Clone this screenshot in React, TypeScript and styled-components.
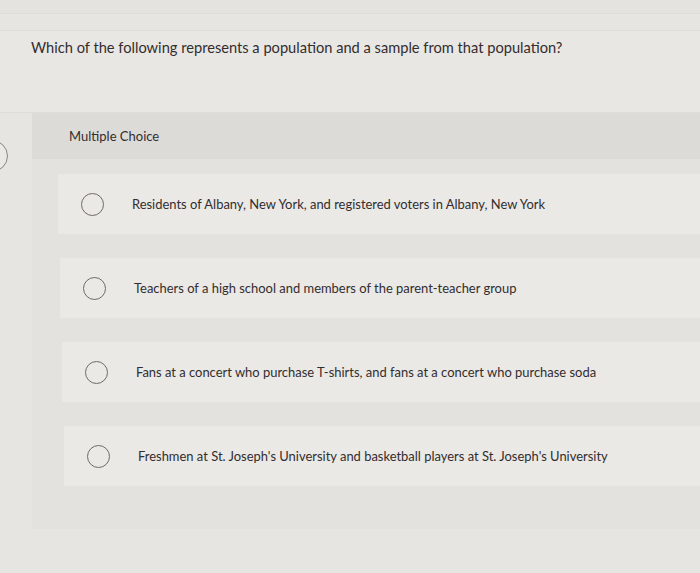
import React from "react";
import styled, { createGlobalStyle } from "styled-components";

const Global = createGlobalStyle`
  html, body { margin: 0; padding: 0; background: #e7e5e1; }
  body { width: 700px; height: 573px; overflow: hidden; font-family: Lato, "Open Sans", sans-serif; }
`;

const Page = styled.div`
  width: 700px;
  height: 573px;
  background: #e7e5e1;
  display: flex;
  flex-direction: column;
  overflow: hidden;
`;

const TopStrip = styled.div`
  height: 13px;
  background: #e5e3df;
  border-bottom: 1px solid #dedcd8;
`;

const QuestionCard = styled.div`
  margin: 16px 0 0 -6px;
  height: 83px;
  border: 1px solid #dfddd9;
  border-right: none;
  border-radius: 6px 0 0 6px;
  background: #e9e7e3;
  padding: 8px 0 0 36px;
  box-sizing: border-box;
`;

const Question = styled.p`
  margin: 0;
  font-size: 14.65px;
  color: #332d2f;
`;

const Body = styled.div`
  display: flex;
  align-items: flex-start;
`;

const SideCircle = styled.div`
  width: 30px;
  height: 30px;
  border-radius: 50%;
  border: 1.5px solid #8a8684;
  background: #ebe9e5;
  margin: 27px 0 0 -24px;
  flex-shrink: 0;
`;

const Panel = styled.div`
  margin-left: 24px;
  flex: 1;
  height: 416px;
  background: #e3e2de;
  display: flex;
  flex-direction: column;
`;

const PanelHeader = styled.div`
  height: 46px;
  background: #dcdbd7;
  display: flex;
  align-items: center;
  padding-left: 37px;
  font-size: 13px;
  color: #332d2f;
`;

const Options = styled.div`
  display: flex;
  flex-direction: column;
  gap: 24px;
  padding-top: 15px;
`;

const OptionRow = styled.div<{ $indent: number }>`
  margin-left: ${(p) => 26 + p.$indent}px;
  height: 60px;
  background: #eae9e5;
  display: flex;
  align-items: center;
  padding-left: 23px;
`;

const Radio = styled.span`
  width: 23px;
  height: 23px;
  border-radius: 50%;
  border: 1.3px solid #6e6a6a;
  box-sizing: border-box;
  flex-shrink: 0;
`;

const OptionText = styled.span`
  margin-left: 28px;
  font-size: 12.95px;
  color: #332d2f;
`;

const options = [
  "Residents of Albany, New York, and registered voters in Albany, New York",
  "Teachers of a high school and members of the parent-teacher group",
  "Fans at a concert who purchase T-shirts, and fans at a concert who purchase soda",
  "Freshmen at St. Joseph's University and basketball players at St. Joseph's University",
];

export default function App() {
  return (
    <Page>
      <Global />
      <TopStrip />
      <QuestionCard>
        <Question>Which of the following represents a population and a sample from that population?</Question>
      </QuestionCard>
      <Body>
        <SideCircle />
        <Panel>
          <PanelHeader>Multiple Choice</PanelHeader>
          <Options>
            {options.map((o, i) => (
              <OptionRow key={i} $indent={i * 2}>
                <Radio />
                <OptionText>{o}</OptionText>
              </OptionRow>
            ))}
          </Options>
        </Panel>
      </Body>
    </Page>
  );
}
